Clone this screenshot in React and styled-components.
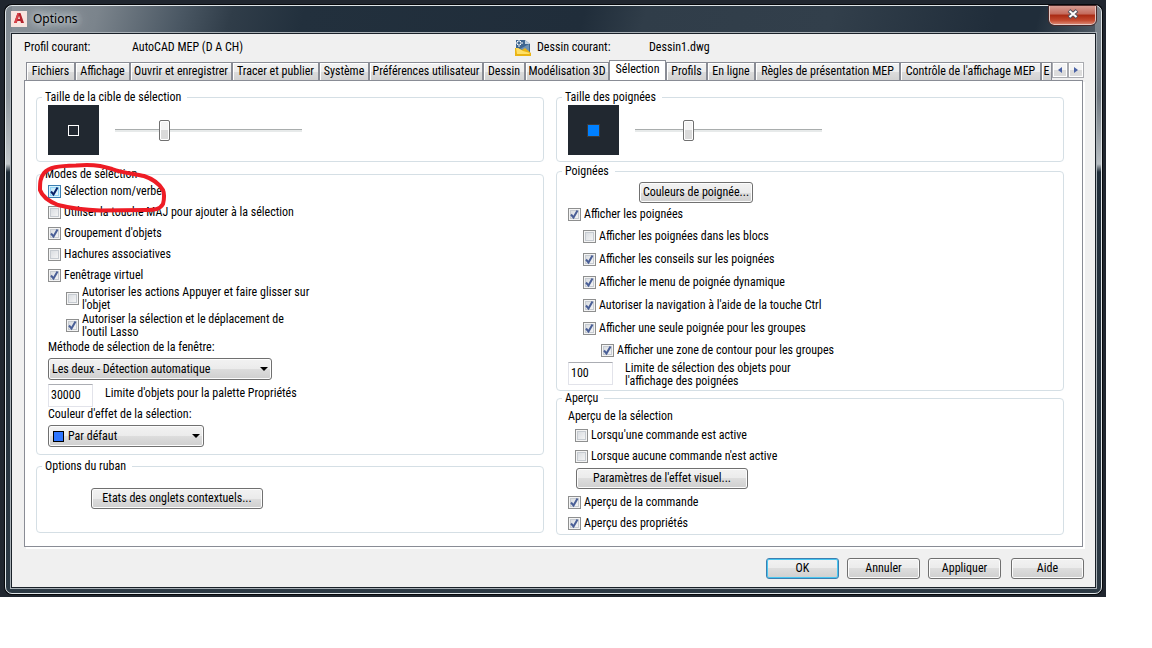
import React from "react";
import styled, { createGlobalStyle, css } from "styled-components";

const GlobalStyle = createGlobalStyle`
  * { box-sizing: border-box; }
  body { margin: 0; background: #fff; color: #000; font: 12px/13px "Roboto Condensed", Roboto, "Liberation Sans", sans-serif; }
  button, input, select { font: inherit; color: inherit; margin: 0; }
`;

const Desktop = styled.div`
  position: relative;
  width: calc(100% - 46px);
  padding: 5px 4px 3px 5px;
  background: #20262f;
`;

const Window = styled.div`
  border: 1px solid #dfe5e8;
  border-radius: 7px;
  box-shadow: 0 0 0 1px #07090c;
  padding: 0 5px 5px;
  background:
    linear-gradient(180deg, #7d868e 0, #8f979e 90px, #c3c8cb 158px, #1f2c38 166px, #2c3944 100%) left / 6px 100% no-repeat,
    linear-gradient(180deg, #7d868e 0, #6f7880 90px, #b8bec3 158px, #1f2c38 166px, #2c3944 100%) right / 6px 100% no-repeat,
    linear-gradient(#2c3944, #2c3944) bottom / 100% 7px no-repeat,
    linear-gradient(105deg, #8a9299 0, #7b848c 90px, #4b5864 170px, #303d49 220px, #22303d 290px, #202d3a 560px, #303d49 620px, #323f4b 800px, #202d3a 960px, #202d3a 1000px, #5c666f 1080px, #727b83 1150px);
`;

const TitleBar = styled.header`
  display: flex;
  align-items: flex-start;
  justify-content: space-between;
  height: 27px;
`;

const TitleText = styled.h1`
  display: flex;
  align-items: center;
  gap: 6px;
  margin: 5px 0 0;
  font: 12px/16px "Noto Sans", sans-serif;
  span { text-shadow: 0 0 6px #dfe4e8, 0 0 10px #c8cfd5, 0 0 14px #c8cfd5; }
`;

const CloseButton = styled.button`
  display: grid;
  place-items: center;
  width: 47px;
  height: 19px;
  padding: 0 0 2px;
  border: 1px solid #e6c9c4;
  border-top: 0;
  border-radius: 0 0 5px 5px;
  outline: 1px solid #4a2a2a;
  background: linear-gradient(180deg, #d69c92 0, #c4695a 45%, #a92a12 50%, #c34a30 80%, #d9826c 100%);
`;

const Client = styled.main`
  border: 1px solid #1a2129;
  box-shadow: 0 0 0 1px #a9b0b6;
  background: #f0f0f0;
  padding: 0 11px 8px 12px;
`;

const Profile = styled.div`
  display: flex;
  align-items: center;
  height: 26px;
`;

const ProfileCell = styled.span`
  display: flex;
  align-items: center;
  gap: 6px;
  width: ${(p) => p.$width}px;
  svg { flex: none; }
`;

const TabStrip = styled.div`
  display: flex;
  height: 20px;
  padding-left: 2px;
`;

const TabList = styled.div`
  display: flex;
  flex: 1;
  min-width: 0;
  align-items: flex-end;
`;

const Tab = styled.button`
  flex: ${(p) => (p.$width ? "none" : "1")};
  width: ${(p) => p.$width}px;
  height: 18px;
  padding: 0;
  white-space: nowrap;
  border: 1px solid #898c95;
  border-bottom: 0;
  box-shadow: inset 1px 1px 0 #fff;
  background: linear-gradient(180deg, #f3f3f3 0, #ececec 50%, #dcdcdc 52%, #d2d2d2 100%);
  ${(p) => p.$active && css`
    height: 20px;
    padding-bottom: 3px;
    background: #fff;
  `}
`;

const TabArrows = styled.div`
  display: flex;
  flex: none;
  height: 16px;
  margin-top: 2px;
`;

const ArrowButton = styled.button`
  display: grid;
  place-items: center;
  width: 16px;
  height: 16px;
  padding: 0;
  border: 1px solid #a9abb0;
  box-shadow: inset 0 0 0 1px #fff;
  background: linear-gradient(180deg, #f4f4f4 0 50%, #dcdcdc 50% 100%);
`;

const Panel = styled.section`
  display: grid;
  grid-template-columns: 1fr 1fr;
  align-items: start;
  gap: 12px;
  margin-right: 1px;
  padding: 10px 18px 11px 11px;
  border: 1px solid #898c95;
  box-shadow: 2px 2px 0 #fff;
  background: #fff;
`;

const Column = styled.div`
  display: flex;
  flex-direction: column;
`;

const Group = styled.fieldset`
  margin: ${(p) => p.$top || 0}px 0 0;
  min-width: 0;
  padding: 0 11px ${(p) => p.$bottom}px;
  border: 1px solid #d5dfe5;
  border-radius: 4px;
`;

const Legend = styled.legend`
  margin-left: -6px;
  padding: 0 6px 0 3px;
  line-height: 12px;
`;

const SizeRow = styled.div`
  display: flex;
  align-items: center;
  gap: 16px;
  padding-top: 2px;
`;

const Preview = styled.div`
  display: grid;
  place-items: center;
  width: 51px;
  height: 50px;
  background: #212830;
`;

const Target = styled.span`
  width: ${(p) => p.$size}px;
  height: ${(p) => p.$size}px;
  border: 1px solid ${(p) => p.$line};
  background: ${(p) => p.$fill};
`;

const Slider = styled.input`
  appearance: none;
  width: 187px;
  height: 22px;
  background: linear-gradient(180deg, #a9adad 0 1px, #e7eaea 1px 3px) 0 10px / 100% 3px no-repeat;
  &::-webkit-slider-thumb {
    appearance: none;
    width: 11px;
    height: 21px;
    border: 1px solid #707070;
    border-radius: 2px;
    box-shadow: inset 0 0 0 1px #fff;
    background: linear-gradient(180deg, #f4f4f4 0 50%, #dadada 50% 100%);
  }
`;

const Row = styled.div`
  display: flex;
  align-items: center;
  gap: 3px;
  min-height: ${(p) => p.$height || 21}px;
  margin-left: ${(p) => p.$indent || 0}px;
`;

const RowLabel = styled.label`
  width: ${(p) => (p.$wrap ? "228px" : "auto")};
`;

const BoxFrame = styled.span`
  display: grid;
  flex: none;
  width: 13px;
  height: 13px;
  > * { grid-area: 1 / 1; }
  svg { pointer-events: none; z-index: 1; }
`;

const CheckInput = styled.input`
  appearance: none;
  width: 13px;
  height: 13px;
  border: 1px solid ${(p) => (p.$hot ? "#3c7fb1" : "#8e8f8f")};
  box-shadow: inset 0 0 0 1px ${(p) => (p.$hot ? "#d8f3fd" : "#f4f4f4")}, inset 0 0 0 2px ${(p) => (p.$hot ? "#8fd3f5" : "#c6cbd1")};
  background: ${(p) => (p.$hot ? "linear-gradient(135deg, #b9e3f8, #effafe)" : "linear-gradient(135deg, #d3d7dc, #fafafa)")};
`;

const Caption = styled.label`
  display: block;
  padding: ${(p) => p.$pad || "2px 0"};
`;

const buttonFace = css`
  border: 1px solid #707070;
  border-radius: 3px;
  box-shadow: inset 0 0 0 1px #fcfcfc;
  background: linear-gradient(180deg, #f2f2f2 0, #ebebeb 50%, #dddddd 50%, #cfcfcf 100%);
`;

const Button = styled.button`
  ${buttonFace}
  display: block;
  flex: none;
  width: ${(p) => p.$width}px;
  height: 21px;
  padding: 0;
  margin: ${(p) => p.$margin || 0};
  white-space: nowrap;
  ${(p) => p.$primary && css`
    border-color: #3c7fb1;
    box-shadow: inset 0 0 0 1px #48c6f0;
  `}
`;

const SelectFrame = styled.span`
  display: grid;
  align-items: center;
  width: ${(p) => p.$width}px;
  > * { grid-area: 1 / 1; }
  svg { justify-self: end; margin-right: 4px; pointer-events: none; }
`;

const Select = styled.select`
  ${buttonFace}
  appearance: none;
  width: 100%;
  height: 22px;
  padding: 0 16px 0 ${(p) => (p.$swatch ? 19 : 3)}px;
`;

const Swatch = styled.i`
  width: 11px;
  height: 11px;
  margin-left: 5px;
  border: 1px solid #000;
  background: #2f76ff;
  pointer-events: none;
`;

const FieldRow = styled.div`
  display: flex;
  align-items: flex-start;
  gap: 12px;
  padding: ${(p) => p.$pad};
`;

const NumberField = styled.input`
  width: 45px;
  height: 23px;
  padding: 0 2px 2px;
  border: 1px solid #e2e3ea;
  border-top-color: #abadb3;
`;

const FieldLabel = styled.label`
  max-width: ${(p) => p.$max}px;
  padding-top: ${(p) => p.$top || 0}px;
`;

const Footer = styled.footer`
  display: flex;
  justify-content: flex-end;
  gap: 8px;
  padding-top: 11px;
  button:last-child { margin-left: 2px; }
`;

const Annotation = styled.svg`
  position: absolute;
  left: 36px;
  top: 160px;
  pointer-events: none;
`;

const AppLogo = () => (
  <svg width="16" height="16" viewBox="0 0 16 16" aria-hidden="true">
    <rect width="16" height="16" fill="#f9e4df" />
    <path d="M3 12 6.500 2h3L13 12h-3l-.6-2H6.400L5.700 12z" fill="#b4232c" />
    <path d="M7 8h2L8 4.600z" fill="#f9e4df" />
    <path d="M3 12 6.500 2H8L5.700 12z" fill="#d8434a" />
  </svg>
);

const DrawingIcon = () => (
  <svg width="16" height="17" viewBox="0 0 16 17" aria-hidden="true">
    <path d="M1 1h9l5 4v10H1z" fill="#3f6690" />
    <path d="M5 10 14 5v8z" fill="#6f93b5" />
    <path d="M10 1v4h5z" fill="#c3d3e2" />
    <path d="M4 0v8M0 4h8M2 2l4 4M6 2 2 6" stroke="#fff" />
    <rect x="3" y="3" width="2" height="2" fill="#3f6690" />
    <path d="M0 9h3l4 2 3-2 6 5v3H0z" fill="#eab414" />
    <path d="M1 9h2l5 3 7 2-1 1H2z" fill="#ffe067" />
  </svg>
);

const TABS = [
  ["Fichiers", 49], ["Affichage", 55], ["Ouvrir et enregistrer", 102], ["Tracer et publier", 87],
  ["Système", 50], ["Préférences utilisateur", 114], ["Dessin", 42], ["Modélisation 3D", 84],
  ["Sélection", 57], ["Profils", 41], ["En ligne", 48], ["Règles de présentation MEP", 145],
  ["Contrôle de l'affichage MEP", 141], ["E"],
];

function Check({ id, label, checked, hot, indent, height, wrap }) {
  const [on, setOn] = React.useState(!!checked);
  return (
    <Row $indent={indent} $height={height}>
      <BoxFrame>
        <CheckInput type="checkbox" id={id} checked={on} $hot={hot} onChange={() => setOn(!on)} />
        {on && (
          <svg width="13" height="13" viewBox="0 0 13 13" aria-hidden="true">
            <path d="M3 6.500 5.500 9.500 9.500 2.500" fill="none" stroke={hot ? "#0a246a" : "#4a5f97"} strokeWidth="2" />
          </svg>
        )}
      </BoxFrame>
      <RowLabel htmlFor={id} $wrap={wrap}>{label}</RowLabel>
    </Row>
  );
}

function Dropdown({ id, width, swatch, value }) {
  return (
    <SelectFrame $width={width}>
      <Select id={id} $swatch={swatch}><option>{value}</option></Select>
      {swatch && <Swatch />}
      <svg width="8" height="4" viewBox="0 0 8 4" aria-hidden="true"><path d="M0 0h8L4 4z" /></svg>
    </SelectFrame>
  );
}

function TabArrow({ label, d }) {
  return (
    <ArrowButton aria-label={label}>
      <svg width="4" height="6" viewBox="0 0 4 6" aria-hidden="true"><path d={d} fill="#4a62a5" /></svg>
    </ArrowButton>
  );
}

export default function App() {
  return (
    <>
      <GlobalStyle />
      <Desktop>
        <Window>
          <TitleBar>
            <TitleText><AppLogo /><span>Options</span></TitleText>
            <CloseButton aria-label="Fermer">
              <svg width="12" height="10" viewBox="0 0 12 10" aria-hidden="true">
                <path d="M2 1.500 10 8.500M10 1.500 2 8.500" stroke="#53525e" strokeWidth="4" />
                <path d="M2.500 2 9.500 8M9.500 2 2.500 8" stroke="#fff" strokeWidth="2" />
              </svg>
            </CloseButton>
          </TitleBar>
          <Client>
            <Profile>
              <ProfileCell $width={108}>Profil courant:</ProfileCell>
              <ProfileCell $width={383}>AutoCAD MEP (D A CH)</ProfileCell>
              <ProfileCell $width={134}><DrawingIcon />Dessin courant:</ProfileCell>
              <ProfileCell $width={100}>Dessin1.dwg</ProfileCell>
            </Profile>
            <TabStrip>
              <TabList role="tablist">
                {TABS.map(([name, width]) => (
                  <Tab key={name} role="tab" $width={width} $active={name === "Sélection"} aria-selected={name === "Sélection"}>{name}</Tab>
                ))}
              </TabList>
              <TabArrows>
                <TabArrow label="Onglets précédents" d="M4 0v6L0 3z" />
                <TabArrow label="Onglets suivants" d="M0 0v6l4-3z" />
              </TabArrows>
            </TabStrip>
            <Panel>
              <Column>
                <Group $bottom={6}>
                  <Legend>Taille de la cible de sélection</Legend>
                  <SizeRow>
                    <Preview><Target $size={11} $line="#fff" $fill="transparent" /></Preview>
                    <Slider type="range" defaultValue="25" aria-label="Taille de la cible de sélection" />
                  </SizeRow>
                </Group>
                <Group $top={6} $bottom={7}>
                  <Legend>Modes de sélection</Legend>
                  <Check id="nom" label="Sélection nom/verbe" checked hot height={22} />
                  <Check id="maj" label="Utiliser la touche MAJ pour ajouter à la sélection" />
                  <Check id="grp" label="Groupement d'objets" checked />
                  <Check id="hach" label="Hachures associatives" />
                  <Check id="fen" label="Fenêtrage virtuel" checked height={20} />
                  <Check id="app" label="Autoriser les actions Appuyer et faire glisser sur l'objet" indent={18} height={27} wrap />
                  <Check id="lasso" label="Autoriser la sélection et le déplacement de l'outil Lasso" checked indent={18} height={27} wrap />
                  <Caption htmlFor="meth" $pad="2px 0 4px">Méthode de sélection de la fenêtre:</Caption>
                  <Dropdown id="meth" width={224} value="Les deux - Détection automatique" />
                  <FieldRow $pad="4px 0 0">
                    <NumberField id="lim" defaultValue="30000" />
                    <FieldLabel htmlFor="lim" $max={300} $top={3}>Limite d'objets pour la palette Propriétés</FieldLabel>
                  </FieldRow>
                  <Caption htmlFor="coul" $pad="1px 0 4px">Couleur d'effet de la sélection:</Caption>
                  <Dropdown id="coul" width={156} swatch value="Par défaut" />
                </Group>
                <Group $top={5} $bottom={23}>
                  <Legend>Options du ruban</Legend>
                  <Button $width={172} $margin="16px 0 0 43px">Etats des onglets contextuels...</Button>
                </Group>
              </Column>
              <Column>
                <Group $bottom={6}>
                  <Legend>Taille des poignées</Legend>
                  <SizeRow>
                    <Preview><Target $size={13} $line="#3a3a3a" $fill="#0080ff" /></Preview>
                    <Slider type="range" defaultValue="27" aria-label="Taille des poignées" />
                  </SizeRow>
                </Group>
                <Group $top={3} $bottom={2}>
                  <Legend>Poignées</Legend>
                  <Button $width={114} $margin="5px 0 0 71px">Couleurs de poignée...</Button>
                  <Check id="p1" label="Afficher les poignées" checked height={22} />
                  <Check id="p2" label="Afficher les poignées dans les blocs" indent={15} height={23} />
                  <Check id="p3" label="Afficher les conseils sur les poignées" checked indent={15} height={23} />
                  <Check id="p4" label="Afficher le menu de poignée dynamique" checked indent={15} height={23} />
                  <Check id="p5" label="Autoriser la navigation à l'aide de la touche Ctrl" checked indent={15} height={23} />
                  <Check id="p6" label="Afficher une seule poignée pour les groupes" checked indent={15} height={22} />
                  <Check id="p7" label="Afficher une zone de contour pour les groupes" checked indent={33} height={22} />
                  <FieldRow $pad="1px 0 0">
                    <NumberField id="lim2" defaultValue="100" />
                    <FieldLabel htmlFor="lim2" $max={180}>Limite de sélection des objets pour l'affichage des poignées</FieldLabel>
                  </FieldRow>
                </Group>
                <Group $top={1} $bottom={0}>
                  <Legend>Aperçu</Legend>
                  <Caption as="div" $pad="6px 0 2px">Aperçu de la sélection</Caption>
                  <Check id="a1" label="Lorsqu'une commande est active" indent={7} />
                  <Check id="a2" label="Lorsque aucune commande n'est active" indent={7} />
                  <Button $width={172} $margin="1px 0 3px 8px">Paramètres de l'effet visuel...</Button>
                  <Check id="a3" label="Aperçu de la commande" checked />
                  <Check id="a4" label="Aperçu des propriétés" checked />
                </Group>
              </Column>
            </Panel>
            <Footer>
              <Button $width={73} $primary>OK</Button>
              <Button $width={73}>Annuler</Button>
              <Button $width={73}>Appliquer</Button>
              <Button $width={73}>Aide</Button>
            </Footer>
          </Client>
        </Window>
        <Annotation width="134" height="56" viewBox="36 160 134 56" aria-hidden="true">
          <path d="M44 173C49 167 58 166 76 165.500C90 164 101 165 112 169C122 173 135 174 144 176C153 179 160 185 163 190C165 195 164 200 163 204C160 209 156 210 145 210L100 210.500C84 210 70 208 58 205C48 201 42 196 40 190C40 183 40 178 44 173" fill="none" stroke="#ee1c25" strokeWidth="4" strokeLinejoin="round" />
        </Annotation>
      </Desktop>
    </>
  );
}
